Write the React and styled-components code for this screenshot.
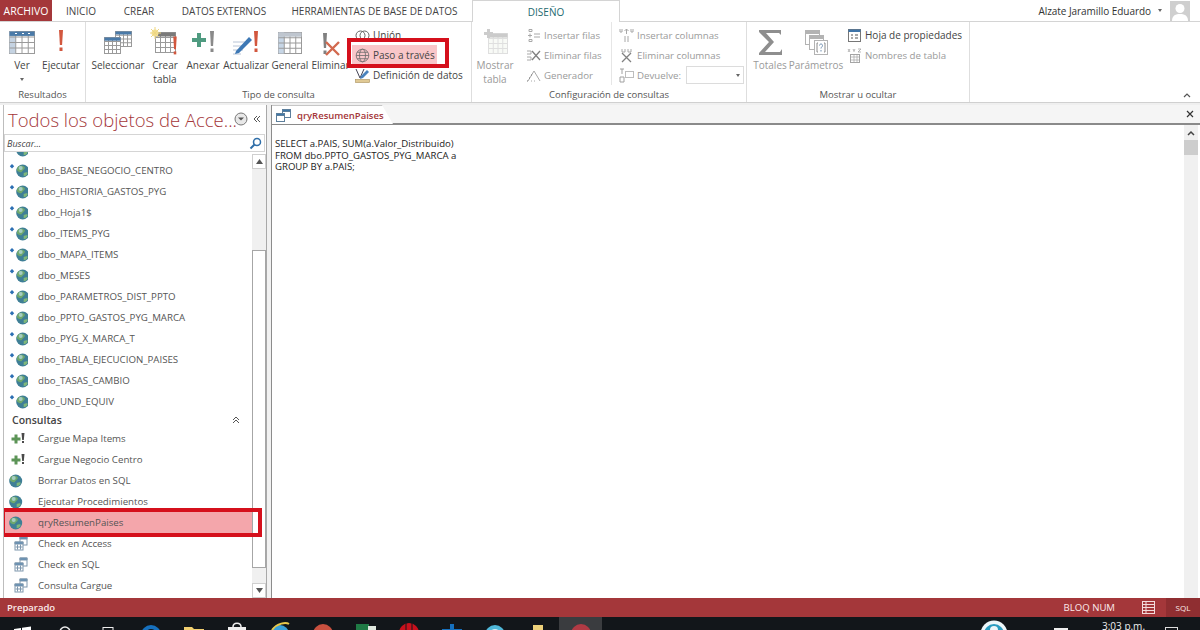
import React from "react";
import styled, { createGlobalStyle } from "styled-components";

const RED = "#a4373a";

const GlobalStyle = createGlobalStyle`
  html, body { margin: 0; padding: 0; background: #fff; }
  * { box-sizing: border-box; }
`;

const Page = styled.div`
  width: 1200px;
  height: 630px;
  overflow: hidden;
  display: flex;
  flex-direction: column;
  background: #fff;
  font-family: "Open Sans", "Liberation Sans", sans-serif;
  font-size: 10px;
  color: #444;
`;

const TabBar = styled.div`
  height: 22px;
  flex: none;
  display: flex;
  border-bottom: 1px solid #d4d4d4;
`;

const FileTab = styled.div`
  width: 52px;
  height: 21px;
  background: ${RED};
  color: #fff;
  font-size: 10.5px;
  line-height: 22px;
  text-align: center;
`;

const MenuTab = styled.div`
  width: ${p => p.$w}px;
  line-height: 22px;
  font-size: 10px;
  text-align: center;
  color: #444;
`;

const ActiveTab = styled(MenuTab)`
  height: 22px;
  margin-left: 3px;
  background: #fff;
  color: #1d6a70;
  border: 1px solid #d4d4d4;
  border-bottom: none;
`;

const UserArea = styled.div`
  margin-left: auto;
  padding-right: 10px;
  display: flex;
  align-items: center;
  gap: 4px;
  font-size: 10px;
  letter-spacing: -0.05px;
  color: #333;
`;

const SmallCaret = styled.span`
  width: 0;
  height: 0;
  border: 2.5px solid transparent;
  border-top: 3px solid #666;
  border-bottom: none;
  margin: ${p => p.$margin || "0 4px 0 3px"};
  display: inline-block;
`;

const Ribbon = styled.div`
  height: 81px;
  flex: none;
  display: flex;
  position: relative;
  border-bottom: 1px solid #d0d0d0;
`;

const RibbonGap = styled.div`
  height: 2px;
  flex: none;
  background: #efefef;
`;

const Group = styled.div`
  width: ${p => p.$w}px;
  display: flex;
  flex-direction: column;
  border-right: 1px solid #dedede;
`;

const GroupBody = styled.div`
  height: 65px;
  flex: none;
  display: flex;
  padding-left: ${p => p.$pad || 0}px;
`;

const GroupLabel = styled.div`
  height: 15px;
  line-height: 15px;
  font-size: 9.5px;
  text-align: center;
  color: #555;
`;

const BigButton = styled.div`
  width: ${p => p.$w}px;
  flex: none;
  display: flex;
  flex-direction: column;
  align-items: center;
  padding-top: 5px;
  font-size: 10px;
  line-height: 14px;
  text-align: center;
  white-space: nowrap;
  color: ${p => (p.$off ? "#9a9a9a" : "#444")};
  svg { height: 31px; flex: none; }
`;

const SmallColumn = styled.div`
  width: ${p => p.$w}px;
  flex: none;
  padding-top: 3px;
  margin-left: ${p => p.$gap || 0}px;
  border-right: ${p => (p.$rule ? "1px solid #e6e6e6" : "none")};
  height: 63px;
`;

const SmallButton = styled.div`
  height: 20px;
  display: flex;
  align-items: center;
  gap: 3px;
  padding-left: 3px;
  font-size: ${p => (p.$off ? "9.7px" : "10px")};
  white-space: nowrap;
  color: ${p => (p.$off ? "#9a9a9a" : "#444")};
  svg { width: 15px; height: 15px; flex: none; }
`;

const HighlightButton = styled(SmallButton)`
  position: relative;
  width: 85px;
  background: #f9c6c9;
  &::after {
    content: "";
    position: absolute;
    inset: -7px -12px -3px -5px;
    border: 4px solid #d5101c;
  }
`;

const DisabledCombo = styled.div`
  width: 59px;
  height: 18px;
  margin-left: 2px;
  border: 1px solid #dcdcdc;
  display: flex;
  align-items: center;
  justify-content: flex-end;
  padding-right: 3px;
`;

const CollapseButton = styled.svg`
  position: absolute;
  right: 9px;
  bottom: 4px;
  width: 8px;
  height: 6px;
`;

const Main = styled.div`
  flex: 1;
  min-height: 0;
  display: flex;
`;

const NavPane = styled.div`
  width: 263px;
  margin-left: 3px;
  flex: none;
  display: flex;
  flex-direction: column;
  border-left: 1px solid #bdbdbd;
`;

const NavHeader = styled.div`
  height: 29px;
  flex: none;
  display: flex;
  align-items: center;
  padding: 0 0 1px 4px;
`;

const NavTitle = styled.div`
  font-size: 18.5px;
  font-weight: 300;
  color: ${RED};
  width: 226px;
  white-space: nowrap;
`;

const ViewMenuIcon = styled.svg`
  width: 14px;
  height: 14px;
  flex: none;
`;

const ShutterIcon = styled.svg`
  width: 8px;
  height: 8px;
  flex: none;
  margin-left: 5px;
`;

const SearchBox = styled.div`
  height: 18px;
  flex: none;
  margin-right: 1px;
  border: 1px solid #d5d5d5;
  display: flex;
  align-items: center;
  justify-content: space-between;
  padding: 0 2px;
  font-size: 9px;
  font-style: italic;
  color: #444;
`;

const ListViewport = styled.div`
  flex: 1;
  min-height: 0;
  overflow: hidden;
  display: flex;
`;

const NavList = styled.div`
  width: 248px;
  flex: none;
  margin-top: -13px;
`;

const NavRow = styled.div`
  height: 21px;
  display: flex;
  align-items: center;
  position: relative;
  font-size: 9.7px;
  color: #555;
  white-space: nowrap;
`;

const NavIconSlot = styled.div`
  width: 34px;
  flex: none;
  padding-left: 2px;
  display: flex;
  align-items: center;
  svg { width: 22px; height: 18px; }
`;

const SelectedRow = styled(NavRow)`
  background: #f4a6ab;
  z-index: 2;
  &::after {
    content: "";
    position: absolute;
    inset: -4px -10px -4px -3px;
    border: 4px solid #d5101c;
  }
`;

const SectionHeader = styled.div`
  height: 16px;
  display: flex;
  align-items: center;
  justify-content: space-between;
  padding: 0 12px 0 8px;
  font-size: 10.5px;
  font-weight: 600;
  color: #444;
`;

const ScrollTrack = styled.div`
  width: 14px;
  flex: none;
  display: flex;
  flex-direction: column;
  background: #f0f0f0;
`;

const NavTrack = styled(ScrollTrack)`
  margin-top: 2px;
`;

const ScrollArrow = styled.div`
  height: 15px;
  flex: none;
  display: flex;
  align-items: center;
  justify-content: center;
  background: #fff;
  border: 1px solid #cfcfcf;
  svg { width: 7px; height: 5px; }
`;

const DocArrow = styled(ScrollArrow)`
  background: #f0f0f0;
  border: none;
  svg { width: 8px; height: 6px; }
`;

const ScrollSpace = styled.div`
  height: ${p => p.$h}px;
  flex: ${p => (p.$grow ? 1 : "none")};
`;

const NavThumb = styled.div`
  height: ${p => p.$h}px;
  flex: none;
  background: #fff;
  border: 1px solid #a6a6a6;
`;

const Splitter = styled.div`
  width: 6px;
  flex: none;
  background: #f1f1f1;
  border-left: 1px solid #a8a8a8;
  border-right: 1px solid #8c8c8c;
`;

const DocArea = styled.div`
  flex: 1;
  min-width: 0;
  display: flex;
  flex-direction: column;
`;

const DocTabs = styled.div`
  height: 20px;
  flex: none;
  display: flex;
  align-items: flex-end;
  justify-content: space-between;
  background: #f5f5f5;
  border-bottom: 2px solid #8a8a8a;
  padding-right: 6px;
`;

const DocTab = styled.div`
  width: 121px;
  height: 19px;
  display: flex;
  align-items: center;
  gap: 6px;
  padding-left: 4px;
  background: #fff;
  border-top: 1px solid #c6c6c6;
  clip-path: polygon(0 0, 110px 0, 121px 100%, 0 100%);
  font-size: 9.5px;
  font-weight: 600;
  color: ${RED};
  margin-bottom: -1px;
  svg { width: 15px; height: 13px; flex: none; }
`;

const CloseGlyph = styled.svg`
  width: 8px;
  height: 8px;
  align-self: center;
`;

const DocBody = styled.div`
  flex: 1;
  min-height: 0;
  display: flex;
  justify-content: space-between;
  padding-right: 2px;
`;

const SqlText = styled.pre`
  margin: 0;
  padding: 13px 0 0 3px;
  font-family: "Open Sans", "Liberation Sans", sans-serif;
  font-size: 9.6px;
  line-height: 11.5px;
  color: #222;
`;

const DocThumb = styled.div`
  height: 15px;
  flex: none;
  background: #cdcdcd;
`;

const StatusBar = styled.div`
  height: 19px;
  flex: none;
  background: ${RED};
  display: flex;
  align-items: center;
  color: #fbeaea;
  font-size: 9.5px;
  font-weight: 600;
  padding-left: 7px;
`;

const StatusRight = styled.div`
  margin-left: auto;
  height: 100%;
  display: flex;
  align-items: center;
  font-weight: 400;
  font-size: 9.6px;
`;

const StatusViewIcon = styled.svg`
  width: 13px;
  height: 13px;
  margin: 0 11px 0 27px;
`;

const SqlBadge = styled.div`
  width: 34px;
  height: 100%;
  background: #8f2e31;
  display: flex;
  align-items: center;
  justify-content: center;
  font-size: 8px;
`;

const Taskbar = styled.div`
  height: 13px;
  flex: none;
  background: #12161a;
  display: flex;
  overflow: hidden;
`;

const TaskCell = styled.div`
  width: 43px;
  height: 13px;
  flex: none;
  display: flex;
  justify-content: center;
  padding-top: ${p => p.$top}px;
  background: ${p => (p.$active ? "#3a3c3f" : "transparent")};
  svg { width: 22px; height: 22px; flex: none; }
`;

const TrayArea = styled.div`
  margin-left: auto;
  display: flex;
  align-items: flex-start;
  color: #eee;
  font-size: 10px;
  padding-right: 22px;
`;

const TrayBadge = styled.svg`
  width: 28px;
  height: 28px;
  margin: 3px 46px 0 0;
  flex: none;
`;

const TrayWhite = styled.div`
  width: 14px;
  height: 4px;
  margin: 11px 34px 0 0;
  background: #eee;
`;

const Clock = styled.div`
  line-height: 13px;
  padding-top: 3px;
  width: 63px;
`;

const TrayBox = styled.div`
  width: 13px;
  height: 8px;
  margin-top: 10px;
  border: 1px solid #ddd;
`;

const Avatar = () => (
  <svg width="20" height="20" viewBox="0 0 20 20">
    <rect width="20" height="20" fill="#cfcfcf" />
    <circle cx="10" cy="7.5" r="4.5" fill="#fff" />
    <path d="M2 20c0-6 4-7 8-7s8 1 8 7z" fill="#fff" />
  </svg>
);

const SheetGrid = ({ x, y, w, h, head = "#4a7aa8", line = "#9a9a9a", fill = "#fff", side }) => {
  const cols = [1, 2, 3].map(i => x + (w * i) / 4);
  const rows = [1, 2, 3].map(i => y + (h * i) / 4);
  return (
    <g>
      <rect x={x} y={y} width={w} height={h} fill={fill} stroke={line} />
      {side && <rect x={x} y={y} width={w / 4} height={h} fill={side} />}
      {cols.map(c => <path key={c} d={`M${c} ${y}V${y + h}`} stroke={line} />)}
      {rows.map(r => <path key={r} d={`M${x} ${r}H${x + w}`} stroke={line} />)}
      <rect x={x} y={y} width={w} height={h / 5} fill={head} />
    </g>
  );
};

const VerIcon = () => (
  <svg width="28" viewBox="0 0 28 31">
    <SheetGrid x={1.5} y={4.5} w={25} h={22} side="#c5d3e2" />
    <path d="M7 6.5h2M14 6.5h2M20 6.5h2" stroke="#fff" />
  </svg>
);

const Bang = ({ color = "#d2573e", x = 0 }) => (
  <g transform={`translate(${x} 0)`}>
    <path d="M-2 3h4l-.9 15h-2.2z" fill={color} />
    <rect x="-1.5" y="20.5" width="3" height="3.5" fill={color} />
  </g>
);

const RunIcon = () => (
  <svg width="12" viewBox="-6 0 12 31"><Bang x={0} /></svg>
);

const SelectIcon = () => (
  <svg width="30" viewBox="0 0 30 31">
    <SheetGrid x={12.5} y={4.5} w={16} h={15} />
    <SheetGrid x={1.5} y={10.5} w={16} h={16} />
  </svg>
);

const MakeTableIcon = () => (
  <svg width="30" viewBox="0 0 30 31">
    <SheetGrid x={5.5} y={5.5} w={20} h={20} head="#7a7a7a" />
    <circle cx="5" cy="6" r="3.5" fill="#f4e29a" />
    <path d="M5 0v12M-1 6h12M1 2l8 8M9 2l-8 8" stroke="#eed680" />
    <g transform="translate(25 7) scale(.85)"><Bang /></g>
  </svg>
);

const AppendIcon = () => (
  <svg width="26" viewBox="0 0 26 31">
    <path d="M7 6h4v5h5v4h-5v5H7v-5H2v-4h5z" fill="#4f9b80" />
    <g transform="translate(22 1)"><Bang color="#8a8a8a" /></g>
  </svg>
);

const UpdateIcon = () => (
  <svg width="28" viewBox="0 0 28 31">
    <path d="M1 15h12M1 19h12M1 23h10M1 27h8" stroke="#b8c4d6" />
    <path d="M4 24L17 10l3 3L7 26l-4 1z" fill="#3d78b5" />
    <g transform="translate(24 1)"><Bang /></g>
  </svg>
);

const GeneralIcon = () => (
  <svg width="26" viewBox="0 0 26 31">
    <SheetGrid x={1.5} y={5.5} w={23} h={21} head="#bfc6cf" side="#c7d6e6" />
  </svg>
);

const DeleteIcon = () => (
  <svg width="20" viewBox="0 0 20 31">
    <g transform="translate(4 3)"><Bang color="#808080" /></g>
    <path d="M5 15l13 13M18 15L5 28" stroke="#d2694f" strokeWidth="2.4" />
  </svg>
);

const ShowTableIcon = () => (
  <svg width="28" viewBox="0 0 28 31">
    <g opacity=".5">
      <SheetGrid x={7.5} y={6.5} w={19} h={20} head="#999" line="#c0c0c0" fill="#f2f6ef" />
      <path d="M3 5h3V2h3v3h3v3H9v3H6V8H3z" fill="#9a9a9a" />
    </g>
  </svg>
);

const UnionIcon = () => (
  <svg viewBox="0 0 15 15" fill="none" stroke="#666">
    <circle cx="5.5" cy="7.5" r="4.5" />
    <circle cx="9.5" cy="7.5" r="4.5" />
  </svg>
);

const WebIcon = () => (
  <svg viewBox="0 0 15 15" fill="none" stroke="#6a6a6a" strokeWidth=".8">
    <circle cx="7.5" cy="7.5" r="6.3" />
    <ellipse cx="7.5" cy="7.5" rx="3" ry="6.3" />
    <path d="M1.2 7.5h12.6M2.2 4.3h10.6M2.2 10.7h10.6" />
  </svg>
);

const DefinitionIcon = () => (
  <svg viewBox="0 0 15 15" fill="none">
    <path d="M1 1l4 9M9 1L5 10" stroke="#445" />
    <path d="M6 8l6-6 2 2-6 6-3 1z" fill="#4a83bd" />
    <rect x="0.5" y="11.5" width="14" height="3" fill="#e0c994" stroke="#a98f5b" strokeWidth=".6" />
  </svg>
);

const InsertRowsIcon = () => (
  <svg viewBox="0 0 15 15" fill="none" stroke="#a8a8a8">
    <path d="M3 1.5h3v2H3zM3 11.5h3v2H3zM2 7.5h4M4 5.5v4M8 6h6M8 9h6" />
  </svg>
);

const DeleteRowsIcon = () => (
  <svg viewBox="0 0 15 15" fill="none" stroke="#a8a8a8">
    <path d="M1 3h4v3H1M1 9h4v3H1" />
    <path d="M6 3l8 9M14 3l-8 9" stroke="#808080" strokeWidth="1.3" />
  </svg>
);

const BuilderIcon = () => (
  <svg viewBox="0 0 15 15" fill="none" stroke="#a8a8a8">
    <path d="M2 13L8 3l6 10M5 13h1M8 13h1" />
    <path d="M1 13h1M3 10h1M5 7h1" stroke="#777" />
  </svg>
);

const InsertColsIcon = () => (
  <svg viewBox="0 0 15 15" fill="none" stroke="#a8a8a8">
    <path d="M1 1v3h2V1M12 1v3h2V1M7.5 1v5M5.5 3l2-2 2 2M6 8v6M9 8v6" />
  </svg>
);

const DeleteColsIcon = () => (
  <svg viewBox="0 0 15 15" fill="none" stroke="#a8a8a8">
    <path d="M3 1v3h3V1M9 1v3h3V1" />
    <path d="M3 5l9 9M12 5l-9 9" stroke="#808080" strokeWidth="1.3" />
  </svg>
);

const ReturnIcon = () => (
  <svg viewBox="0 0 15 15" fill="none" stroke="#a0a0a0">
    <path d="M1 1h4M3 1v5" />
    <rect x="6.5" y="3.5" width="8" height="6" stroke="#bdbdbd" />
    <path d="M1 9h4v5H1z" />
  </svg>
);

const SigmaIcon = () => (
  <svg width="26" viewBox="0 0 26 31">
    <path d="M2 3h22v5l-2-2H9l8 9-9 10h15l2-3v6H2v-2l10-11L2 5z" fill="#8e8e8e" />
  </svg>
);

const ParamsIcon = () => (
  <svg width="26" viewBox="0 0 26 31">
    <g opacity=".75" fill="#fff" stroke="#9a9a9a">
      <rect x="2.5" y="3.5" width="14" height="14" />
      <path d="M2.5 3.5h14v3h-14z" fill="#9a9a9a" />
      <rect x="6.5" y="8.5" width="14" height="14" />
      <path d="M6.5 8.5h14v3h-14z" fill="#9a9a9a" />
      <rect x="11.5" y="13.5" width="13" height="14" />
    </g>
    <path d="M15 16h-1v9h1M21 16h1v9h-1" stroke="#8c8c8c" fill="none" />
    <path d="M16.5 18.5c0-2 3-2 3 0 0 1.5-1.500 1.500-1.500 3M18 23v1.500" stroke="#6f8fb0" fill="none" />
  </svg>
);

const PropertySheetIcon = () => (
  <svg viewBox="0 0 15 15" fill="none">
    <rect x="1.5" y="1.5" width="12" height="12" stroke="#777" fill="#fff" />
    <rect x="1.5" y="1.5" width="12" height="2.5" fill="#3f74a8" />
    <path d="M4 7h2M4 10h2M8 7h3M8 10h3" stroke="#555" />
  </svg>
);

const TableNamesIcon = () => (
  <svg viewBox="0 0 15 15" fill="none" stroke="#a5a5a5">
    <path d="M1 1l2 3M3 1L1 4M6 1l1 2 1-2M7 3v1M11 1h3l-3 3h3" strokeWidth=".8" />
    <rect x="3.5" y="6.5" width="9" height="8" />
    <path d="M3.5 9h9M3.5 12h9M7 7v7M10 7v7" strokeWidth=".7" />
  </svg>
);

const GlobeShape = () => (
  <g>
    <circle cx="13" cy="10" r="6.5" fill="#3f7f96" />
    <path d="M8 6c3-2 5-1 7 0 1 2-2 3-3 5-2 1-4-1-5-2z" fill="#6fa86c" />
    <path d="M14 12c2-1 4-1 4 0-1 3-3 3-4 3z" fill="#7fb87a" />
    <circle cx="11" cy="7" r="2" fill="#bcdde8" opacity=".7" />
  </g>
);

const LinkedGlobe = () => (
  <svg viewBox="0 0 22 18">
    <path d="M6 2l2.200 2.200L6 6.400 3.800 4.200z" fill="#2c6fb3" />
    <g transform="translate(3.700 -1)"><GlobeShape /></g>
  </svg>
);

const PlainGlobe = () => (
  <svg viewBox="0 0 22 18">
    <g transform="translate(-3.300 -1)"><GlobeShape /></g>
  </svg>
);

const AppendQueryIcon = () => (
  <svg viewBox="0 0 22 18">
    <path d="M8.500 4.500h3v3h3v3h-3v3h-3v-3h-3v-3h3z" fill="#5c9457" />
    <path d="M15.500 3h3l-.7 7h-1.600zM16 11h2v2h-2z" fill="#4a4a4a" />
  </svg>
);

const TableQueryIcon = () => (
  <svg viewBox="0 0 22 18">
    <g transform="translate(8.500 1.500)" stroke="#7f97ad" fill="#fff">
      <rect x="5.500" y=".5" width="7" height="8" />
      <path d="M5.500.5h7v2h-7z" fill="#5b8cb6" />
      <rect x=".5" y="5.500" width="8" height="8" />
      <path d="M.5 5.500h8v2h-8z" fill="#5b8cb6" />
      <path d="M3 8v5M6 8v5M1 10.500h7" />
    </g>
  </svg>
);

const ArrowUp = () => (
  <svg viewBox="0 0 7 5"><path d="M3.500 0L7 5H0z" fill="#555" /></svg>
);

const ArrowDown = () => (
  <svg viewBox="0 0 7 5"><path d="M3.500 5L7 0H0z" fill="#555" /></svg>
);

const ChevronUp = () => (
  <svg viewBox="0 0 8 6"><path d="M1 5l3-3 3 3" fill="none" stroke="#444" strokeWidth="1.500" /></svg>
);

const WinLogo = () => (
  <svg viewBox="0 0 22 22"><path d="M3 5l7-1v7H3zM11 3.800L20 2.500V11h-9z" fill="#fff" /></svg>
);
const SearchRing = () => (
  <svg viewBox="0 0 22 22"><circle cx="11" cy="7" r="5" fill="none" stroke="#eee" strokeWidth="1.500" /></svg>
);
const TaskView = () => (
  <svg viewBox="0 0 22 22"><rect x="6" y="2.500" width="10" height="12" fill="none" stroke="#eee" /></svg>
);
const Disc = ({ color, ring }) => (
  <svg viewBox="0 0 22 22">
    <circle cx="11" cy="11" r="10" fill={color} />
    {ring && <circle cx="11" cy="11" r="6" fill={ring} />}
  </svg>
);
const Folder = () => (
  <svg viewBox="0 0 22 22"><path d="M1 2h8l2 2h10v16H1z" fill="#f1cf70" /></svg>
);
const Store = () => (
  <svg viewBox="0 0 22 22">
    <path d="M7 5c0-5 8-5 8 0" stroke="#eee" fill="none" strokeWidth="1.500" />
    <rect x="2" y="5" width="18" height="16" fill="#eee" />
  </svg>
);
const ExplorerE = () => (
  <svg viewBox="0 0 22 22">
    <circle cx="11" cy="12" r="9" fill="#3aa0d8" />
    <path d="M3 8C8 1 17 0 20 2" stroke="#e6c74a" fill="none" strokeWidth="2" />
  </svg>
);
const SheetApp = ({ color }) => (
  <svg viewBox="0 0 22 22">
    <rect x="1" y="1" width="13" height="20" fill={color} />
    <rect x="13" y="3" width="8" height="16" fill="#dfe8df" />
  </svg>
);
const Splash = () => (
  <svg viewBox="0 0 22 22">
    <circle cx="11" cy="11" r="10" fill="#c8101c" />
    <path d="M8 0v8M14 0v8" stroke="#12161a" />
  </svg>
);
const BlueApp = () => (
  <svg viewBox="0 0 22 22">
    <path d="M1 6h8V1h4v5h8v15H1z" fill="#1670bd" />
  </svg>
);
const Yellow = () => (
  <svg viewBox="0 0 22 22"><rect x="6" y="2" width="10" height="18" fill="#ecd07a" /></svg>
);

const tableRows = [
  "dbo_BASE_NEGOCIO_CENTRO",
  "dbo_HISTORIA_GASTOS_PYG",
  "dbo_Hoja1$",
  "dbo_ITEMS_PYG",
  "dbo_MAPA_ITEMS",
  "dbo_MESES",
  "dbo_PARAMETROS_DIST_PPTO",
  "dbo_PPTO_GASTOS_PYG_MARCA",
  "dbo_PYG_X_MARCA_T",
  "dbo_TABLA_EJECUCION_PAISES",
  "dbo_TASAS_CAMBIO",
  "dbo_UND_EQUIV",
];

const queryRows = [
  { name: "Cargue Mapa Items", Icon: AppendQueryIcon },
  { name: "Cargue Negocio Centro", Icon: AppendQueryIcon },
  { name: "Borrar Datos en SQL", Icon: PlainGlobe },
  { name: "Ejecutar Procedimientos", Icon: PlainGlobe },
];

const afterRows = ["Check en Access", "Check en SQL", "Consulta Cargue"];

const RibbonBar = () => (
  <Ribbon>
    <Group $w={86}>
      <GroupBody $pad={2}>
        <BigButton $w={40}>
          <VerIcon />
          Ver
          <SmallCaret $margin="6px 0 0" />
        </BigButton>
        <BigButton $w={38}>
          <RunIcon />
          Ejecutar
        </BigButton>
      </GroupBody>
      <GroupLabel>Resultados</GroupLabel>
    </Group>
    <Group $w={386}>
      <GroupBody $pad={5}>
        <BigButton $w={54}><SelectIcon />Seleccionar</BigButton>
        <BigButton $w={40}><MakeTableIcon />Crear<br />tabla</BigButton>
        <BigButton $w={36}><AppendIcon />Anexar</BigButton>
        <BigButton $w={50}><UpdateIcon />Actualizar</BigButton>
        <BigButton $w={38}><GeneralIcon />General</BigButton>
        <BigButton $w={43}><DeleteIcon />Eliminar</BigButton>
        <SmallColumn $w={115}>
          <SmallButton><UnionIcon />Unión</SmallButton>
          <HighlightButton><WebIcon />Paso a través</HighlightButton>
          <SmallButton><DefinitionIcon />Definición de datos</SmallButton>
        </SmallColumn>
      </GroupBody>
      <GroupLabel>Tipo de consulta</GroupLabel>
    </Group>
    <Group $w={275}>
      <GroupBody $pad={5}>
        <BigButton $w={36} $off><ShowTableIcon />Mostrar<br />tabla</BigButton>
        <SmallColumn $w={89} $gap={10} $rule>
          <SmallButton $off><InsertRowsIcon />Insertar filas</SmallButton>
          <SmallButton $off><DeleteRowsIcon />Eliminar filas</SmallButton>
          <SmallButton $off><BuilderIcon />Generador</SmallButton>
        </SmallColumn>
        <SmallColumn $w={128} $gap={4}>
          <SmallButton $off><InsertColsIcon />Insertar columnas</SmallButton>
          <SmallButton $off><DeleteColsIcon />Eliminar columnas</SmallButton>
          <SmallButton $off>
            <ReturnIcon />Devuelve:
            <DisabledCombo><SmallCaret $margin="0" /></DisabledCombo>
          </SmallButton>
        </SmallColumn>
      </GroupBody>
      <GroupLabel>Configuración de consultas</GroupLabel>
    </Group>
    <Group $w={223}>
      <GroupBody $pad={5}>
        <BigButton $w={36} $off><SigmaIcon />Totales</BigButton>
        <BigButton $w={56} $off><ParamsIcon />Parámetros</BigButton>
        <SmallColumn $w={120}>
          <SmallButton><PropertySheetIcon />Hoja de propiedades</SmallButton>
          <SmallButton $off><TableNamesIcon />Nombres de tabla</SmallButton>
        </SmallColumn>
      </GroupBody>
      <GroupLabel>Mostrar u ocultar</GroupLabel>
    </Group>
    <CollapseButton viewBox="0 0 8 6">
      <path d="M1 5l3-3 3 3" fill="none" stroke="#555" strokeWidth="1.2" />
    </CollapseButton>
  </Ribbon>
);

const NavigationPane = () => (
  <NavPane>
    <NavHeader>
      <NavTitle>Todos los objetos de Acce...</NavTitle>
      <ViewMenuIcon viewBox="0 0 14 14">
        <circle cx="7" cy="7" r="6" fill="#e8e8e8" stroke="#777" />
        <path d="M4 5.5l3 3 3-3z" fill="#555" />
      </ViewMenuIcon>
      <ShutterIcon viewBox="0 0 8 8" fill="none" stroke="#555">
        <path d="M4 1L1 4l3 3M7 1L4 4l3 3" />
      </ShutterIcon>
    </NavHeader>
    <SearchBox>
      Buscar...
      <svg width="13" height="13" viewBox="0 0 13 13" fill="none" stroke="#2f6ea8" strokeWidth="1.5">
        <circle cx="8" cy="5" r="3.5" />
        <path d="M5.5 7.500L1.500 11.500" strokeWidth="2" />
      </svg>
    </SearchBox>
    <ListViewport>
      <NavList>
        <NavRow>
          <NavIconSlot><LinkedGlobe /></NavIconSlot>
        </NavRow>
        {tableRows.map(name => (
          <NavRow key={name}>
            <NavIconSlot><LinkedGlobe /></NavIconSlot>
            {name}
          </NavRow>
        ))}
        <SectionHeader>
          Consultas
          <svg width="8" height="8" viewBox="0 0 8 8" fill="none" stroke="#555">
            <path d="M1 4l3-3 3 3M1 7l3-3 3 3" />
          </svg>
        </SectionHeader>
        {queryRows.map(({ name, Icon }) => (
          <NavRow key={name}>
            <NavIconSlot><Icon /></NavIconSlot>
            {name}
          </NavRow>
        ))}
        <SelectedRow>
          <NavIconSlot><PlainGlobe /></NavIconSlot>
          qryResumenPaises
        </SelectedRow>
        {afterRows.map(name => (
          <NavRow key={name}>
            <NavIconSlot><TableQueryIcon /></NavIconSlot>
            {name}
          </NavRow>
        ))}
      </NavList>
      <NavTrack>
        <ScrollArrow><ArrowUp /></ScrollArrow>
        <ScrollSpace $h={81} />
        <NavThumb $h={318} />
        <ScrollSpace $grow />
        <ScrollArrow><ArrowDown /></ScrollArrow>
      </NavTrack>
    </ListViewport>
  </NavPane>
);

const SqlDocument = () => (
  <DocArea>
    <DocTabs>
      <DocTab>
        <svg viewBox="0 0 15 13">
          <g stroke="#5d7f9c" fill="#fff">
            <rect x="6.5" y=".5" width="8" height="8" />
            <path d="M6.5.5h8v2h-8z" fill="#3e77a8" />
            <rect x=".5" y="4.5" width="8" height="8" />
            <path d="M.5 4.5h8v2h-8z" fill="#3e77a8" />
          </g>
        </svg>
        qryResumenPaises
      </DocTab>
      <CloseGlyph viewBox="0 0 8 8">
        <path d="M1 1l6 6M7 1L1 7" stroke="#333" strokeWidth="1.2" />
      </CloseGlyph>
    </DocTabs>
    <DocBody>
      <SqlText>{`SELECT a.PAIS, SUM(a.Valor_Distribuido)
FROM dbo.PPTO_GASTOS_PYG_MARCA a
GROUP BY a.PAIS;`}</SqlText>
      <ScrollTrack>
        <DocArrow><ChevronUp /></DocArrow>
        <DocThumb />
      </ScrollTrack>
    </DocBody>
  </DocArea>
);

const TaskbarStrip = () => (
  <Taskbar>
    <TaskCell $top={7}><WinLogo /></TaskCell>
    <TaskCell $top={8}><SearchRing /></TaskCell>
    <TaskCell $top={8}><TaskView /></TaskCell>
    <TaskCell $top={7}><Disc color="#1670bd" ring="#12161a" /></TaskCell>
    <TaskCell $top={8}><Folder /></TaskCell>
    <TaskCell $top={5}><Store /></TaskCell>
    <TaskCell $top={5}><ExplorerE /></TaskCell>
    <TaskCell $top={6}><Disc color="#c8503f" /></TaskCell>
    <TaskCell $top={6}><SheetApp color="#1f7a45" /></TaskCell>
    <TaskCell $top={5}><Splash /></TaskCell>
    <TaskCell $top={6}><BlueApp /></TaskCell>
    <TaskCell $top={7}><Disc color="#4fb7d8" ring="#d7eef5" /></TaskCell>
    <TaskCell $top={6}><Yellow /></TaskCell>
    <TaskCell $active $top={6}><Disc color="#b03a44" /></TaskCell>
    <TrayArea>
      <TrayBadge viewBox="0 0 28 28">
        <circle cx="14" cy="14" r="13.5" fill="#eef7fa" />
        <circle cx="14" cy="14" r="10" fill="#2a9cc0" />
        <circle cx="14" cy="10" r="4" fill="#eef7fa" />
      </TrayBadge>
      <TrayWhite />
      <Clock>3:03 p.m.</Clock>
      <TrayBox />
    </TrayArea>
  </Taskbar>
);

const App = () => (
  <Page>
    <GlobalStyle />
    <TabBar>
      <FileTab>ARCHIVO</FileTab>
      <MenuTab $w={58}>INICIO</MenuTab>
      <MenuTab $w={58}>CREAR</MenuTab>
      <MenuTab $w={112}>DATOS EXTERNOS</MenuTab>
      <MenuTab $w={189}>HERRAMIENTAS DE BASE DE DATOS</MenuTab>
      <ActiveTab $w={148}>DISEÑO</ActiveTab>
      <UserArea>
        Alzate Jaramillo Eduardo
        <SmallCaret />
        <Avatar />
      </UserArea>
    </TabBar>
    <RibbonBar />
    <RibbonGap />
    <Main>
      <NavigationPane />
      <Splitter />
      <SqlDocument />
    </Main>
    <StatusBar>
      Preparado
      <StatusRight>
        BLOQ NUM
        <StatusViewIcon viewBox="0 0 13 13" fill="none" stroke="#f3dcdc">
          <rect x=".5" y=".5" width="12" height="12" />
          <path d="M.5 3.500h12M.5 6.500h12M.5 9.500h12M4 .5v12" />
        </StatusViewIcon>
        <SqlBadge>SQL</SqlBadge>
      </StatusRight>
    </StatusBar>
    <TaskbarStrip />
  </Page>
);

export default App;
